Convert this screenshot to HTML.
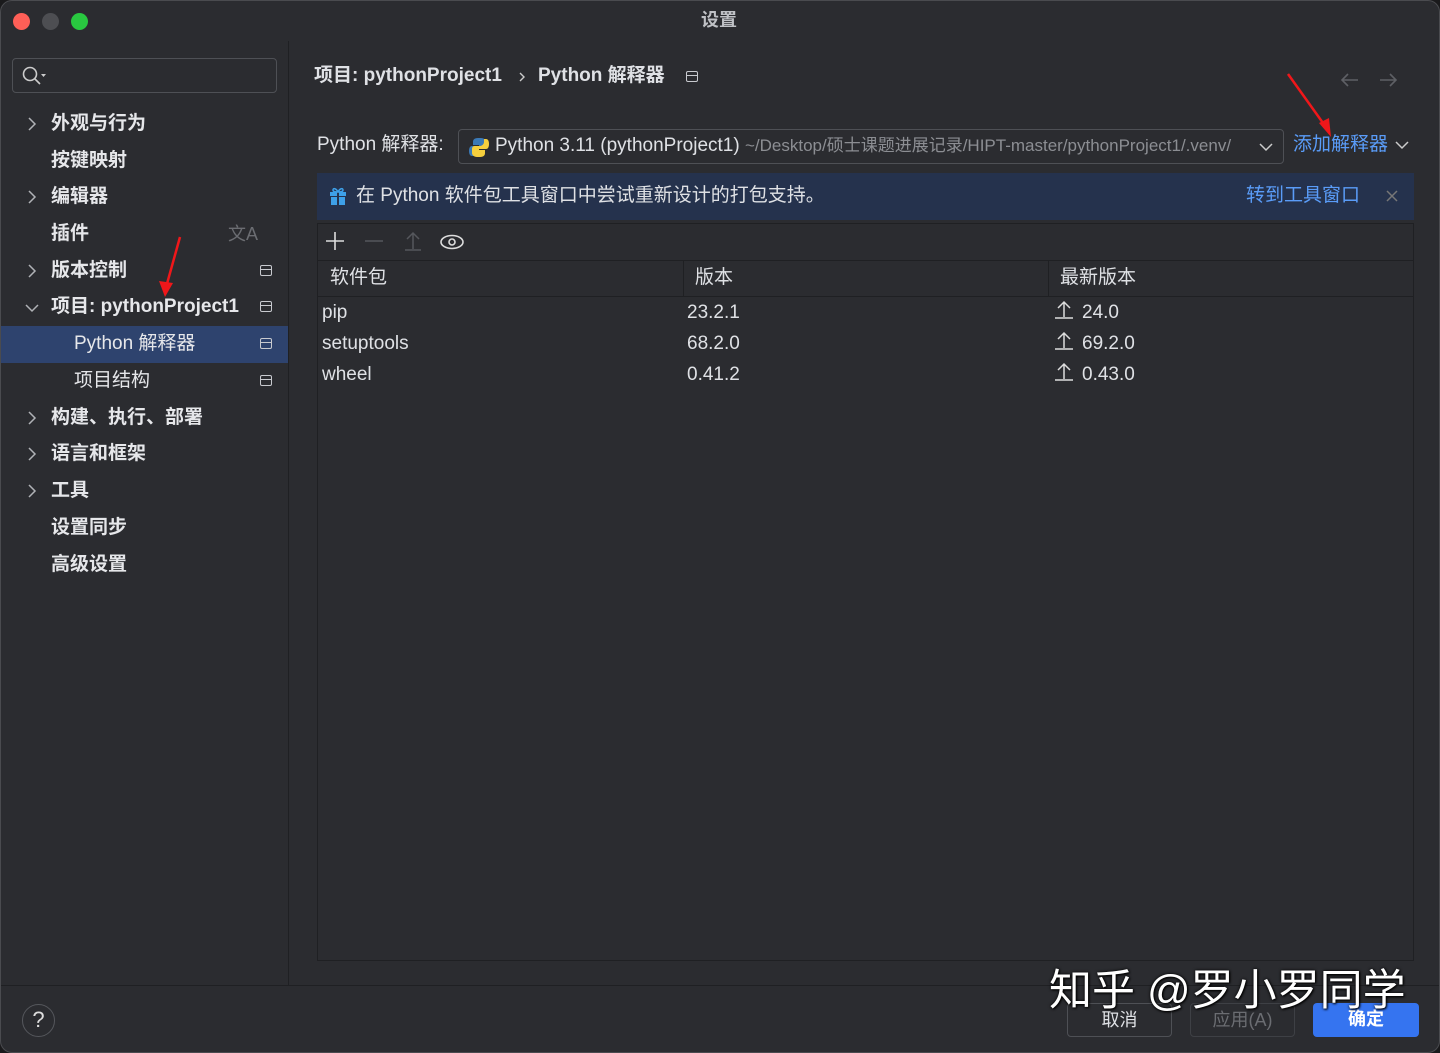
<!DOCTYPE html>
<html><head><meta charset="utf-8"><style>
*{margin:0;padding:0;box-sizing:border-box}
body{width:1440px;height:1053px;background:#1a1a1c;font-family:"Liberation Sans","Noto Sans CJK SC",sans-serif;color:#dfe1e5;overflow:hidden;position:relative;line-height:1.15}
.win{position:absolute;left:0;top:0;width:1440px;height:1053px;background:#2b2c30;border-radius:12px;border:1px solid #4a4b4f;overflow:hidden}
.abs{position:absolute;white-space:nowrap}
.dot{position:absolute;top:12px;width:17px;height:17px;border-radius:50%}
.side{position:absolute;left:0;top:40px;width:288px;height:944px;border-right:1px solid #1f2023}
.item{position:absolute;left:50px;font-size:19px;font-weight:bold;color:#e6e7ea}
.chev{position:absolute;left:25px}
.ico{position:absolute;width:12px;height:11px;border:1.5px solid #c8cacf;border-radius:2px}
.ico:after{content:"";position:absolute;left:0;right:0;top:3px;border-top:1.5px solid #c8cacf}
</style></head><body>
<div class="win">
<div class="dot" style="left:12px;background:#fe5f57"></div>
<div class="dot" style="left:41px;background:#4d4e52"></div>
<div class="dot" style="left:70px;background:#29c840"></div>
<div class="abs" style="left:700px;top:9px;font-size:18px;font-weight:bold;color:#bfc1c5">设置</div>

<div class="side">
<div class="abs" style="left:11px;top:17px;width:265px;height:35px;border:1px solid #4e5055;border-radius:4px"></div>
<svg class="abs" style="left:20px;top:24px" width="28" height="22" viewBox="0 0 28 22"><circle cx="9" cy="9" r="6.5" fill="none" stroke="#ccc" stroke-width="1.6"/><path d="M14 14l5 5" stroke="#ccc" stroke-width="1.6"/><path d="M20 9h5l-2.5 3z" fill="#ccc"/></svg>
<svg class="chev" style="top:76px" width="12" height="14"><path d="M3 1l6 6-6 6" fill="none" stroke="#b0b2b6" stroke-width="1.5"/></svg>
<div class="item" style="top:72px">外观与行为</div>
<div class="item" style="top:109px">按键映射</div>
<svg class="chev" style="top:149px" width="12" height="14"><path d="M3 1l6 6-6 6" fill="none" stroke="#b0b2b6" stroke-width="1.5"/></svg>
<div class="item" style="top:145px">编辑器</div>
<div class="item" style="top:182px">插件</div>
<div class="abs" style="left:227px;top:183px;font-size:18px;color:#6b6d72">文A</div>
<svg class="chev" style="top:223px" width="12" height="14"><path d="M3 1l6 6-6 6" fill="none" stroke="#b0b2b6" stroke-width="1.5"/></svg>
<div class="item" style="top:219px">版本控制</div>
<div class="ico" style="left:259px;top:224px"></div>
<svg class="chev" style="top:261px;left:24px" width="14" height="12"><path d="M1 3l6 6 6-6" fill="none" stroke="#b0b2b6" stroke-width="1.5"/></svg>
<div class="item" style="top:255px">项目: pythonProject1</div>
<div class="ico" style="left:259px;top:260px"></div>
<div class="abs" style="left:0;top:285px;width:287px;height:37px;background:#2e436e"></div>
<div class="abs" style="left:73px;top:292px;font-size:19px;color:#e6e7ea">Python 解释器</div>
<div class="ico" style="left:259px;top:297px"></div>
<div class="abs" style="left:73px;top:329px;font-size:19px;color:#e6e7ea">项目结构</div>
<div class="ico" style="left:259px;top:334px"></div>
<svg class="chev" style="top:370px" width="12" height="14"><path d="M3 1l6 6-6 6" fill="none" stroke="#b0b2b6" stroke-width="1.5"/></svg>
<div class="item" style="top:366px">构建、执行、部署</div>
<svg class="chev" style="top:406px" width="12" height="14"><path d="M3 1l6 6-6 6" fill="none" stroke="#b0b2b6" stroke-width="1.5"/></svg>
<div class="item" style="top:402px">语言和框架</div>
<svg class="chev" style="top:443px" width="12" height="14"><path d="M3 1l6 6-6 6" fill="none" stroke="#b0b2b6" stroke-width="1.5"/></svg>
<div class="item" style="top:439px">工具</div>
<div class="item" style="top:476px">设置同步</div>
<div class="item" style="top:513px">高级设置</div>
</div>
<svg class="abs" style="left:155px;top:232px" width="30" height="68"><path d="M24 4L9 58" stroke="#f0171a" stroke-width="2.5"/><path d="M3 48l6 16 8-14z" fill="#f0171a"/></svg>

<div class="abs" style="left:313px;top:64px;font-size:19px;font-weight:bold">项目: pythonProject1</div>
<svg class="abs" style="left:517px;top:71px" width="8" height="10"><path d="M2 1l4 4-4 4" fill="none" stroke="#ccc" stroke-width="1.4"/></svg>
<div class="abs" style="left:537px;top:64px;font-size:19px;font-weight:bold">Python 解释器</div>
<div class="ico" style="left:685px;top:70px"></div>
<svg class="abs" style="left:1338px;top:70px" width="60" height="18"><path d="M19 9H3M9 3L3 9l6 6M41 9h16M51 3l6 6-6 6" fill="none" stroke="#5e6065" stroke-width="1.6"/></svg>
<svg class="abs" style="left:1283px;top:70px" width="50" height="70"><path d="M4 3l40 56" stroke="#f0171a" stroke-width="2.5"/><path d="M35 52l12 14-2-19z" fill="#f0171a"/></svg>

<div class="abs" style="left:316px;top:133px;font-size:19px">Python 解释器:</div>
<div class="abs" style="left:457px;top:128px;width:826px;height:35px;border:1px solid #4e5055;border-radius:4px;background:#2b2c30"></div>
<svg class="abs" style="left:467px;top:135px" width="22" height="22"><path d="M10 2c-4 0-5 2-5 4v3h6v1H4c-2 0-3 2-3 5s1 5 3 5h2v-3c0-2 2-4 4-4h5c2 0 3-1 3-3V6c0-2-2-4-5-4z" fill="#3b79b6"/><path d="M12 21c4 0 5-2 5-4v-3h-6v-1h7c2 0 3-2 3-5s-1-5-3-5h-2v3c0 2-2 4-4 4H7c-2 0-3 1-3 3v4c0 2 2 4 5 4z" fill="#f6cf3d"/></svg>
<div class="abs" style="left:494px;top:134px;font-size:19px">Python 3.11 (pythonProject1) <span style="color:#8c8e93;font-size:17px">~/Desktop/硕士课题进展记录/HIPT-master/pythonProject1/.venv/</span></div>
<svg class="abs" style="left:1258px;top:141px" width="14" height="10"><path d="M1 2l6 6 6-6" fill="none" stroke="#ccc" stroke-width="1.5"/></svg>
<div class="abs" style="left:1292px;top:133px;font-size:19px;color:#5a9cf8">添加解释器</div>
<svg class="abs" style="left:1394px;top:139px" width="14" height="10"><path d="M1 2l6 6 6-6" fill="none" stroke="#ccc" stroke-width="1.5"/></svg>

<div class="abs" style="left:316px;top:172px;width:1097px;height:47px;background:#25324d"></div>
<svg class="abs" style="left:328px;top:185px" width="18" height="20"><rect x="1" y="6" width="16" height="4" fill="#3ea0e8"/><rect x="2" y="11" width="14" height="8" fill="#3ea0e8"/><rect x="8" y="6" width="2" height="13" fill="#25324d"/><path d="M9 6C7 2 4 2 4 4s3 2 5 2c2 0 5 0 5-2s-3-2-5 2" fill="none" stroke="#3ea0e8" stroke-width="1.5"/></svg>
<div class="abs" style="left:355px;top:184px;font-size:19px">在 Python 软件包工具窗口中尝试重新设计的打包支持。</div>
<div class="abs" style="left:1245px;top:184px;font-size:19px;color:#5a9cf8">转到工具窗口</div>
<svg class="abs" style="left:1385px;top:189px" width="12" height="12"><path d="M1 1l10 10M11 1L1 11" stroke="#777" stroke-width="1.5"/></svg>

<div class="abs" style="left:316px;top:222px;width:1097px;height:738px;border:1px solid #1f2023"></div>
<div class="abs" style="left:316px;top:259px;width:1097px;border-top:1px solid #1f2023"></div>
<div class="abs" style="left:316px;top:295px;width:1097px;border-top:1px solid #1f2023"></div>
<div class="abs" style="left:682px;top:260px;height:35px;border-left:1px solid #1f2023"></div>
<div class="abs" style="left:1047px;top:260px;height:35px;border-left:1px solid #1f2023"></div>
<svg class="abs" style="left:324px;top:230px" width="20" height="20"><path d="M10 1v18M1 10h18" stroke="#ddd" stroke-width="1.6"/></svg>
<svg class="abs" style="left:363px;top:230px" width="20" height="20"><path d="M1 10h18" stroke="#55575c" stroke-width="1.6"/></svg>
<svg class="abs" style="left:402px;top:229px" width="20" height="22"><path d="M10 3v16M4 9l6-6 6 6M2 20h16" fill="none" stroke="#55575c" stroke-width="1.5"/></svg>
<svg class="abs" style="left:438px;top:232px" width="26" height="18"><ellipse cx="13" cy="9" rx="11" ry="6.5" fill="none" stroke="#ddd" stroke-width="1.6"/><circle cx="13" cy="9" r="3" fill="none" stroke="#ddd" stroke-width="1.6"/></svg>
<div class="abs" style="left:329px;top:266px;font-size:19px">软件包</div>
<div class="abs" style="left:694px;top:266px;font-size:19px">版本</div>
<div class="abs" style="left:1059px;top:266px;font-size:19px">最新版本</div>
<div class="abs" style="left:321px;top:296px;font-size:19px;line-height:31px">pip<br>setuptools<br>wheel</div>
<div class="abs" style="left:686px;top:296px;font-size:19px;line-height:31px">23.2.1<br>68.2.0<br>0.41.2</div>
<svg class="abs" style="left:1053px;top:299px" width="20" height="85"><g fill="none" stroke="#ddd" stroke-width="1.5"><path d="M10 2v15M4 8l6-6 6 6M1 18h18"/><path d="M10 33v15M4 39l6-6 6 6M1 49h18"/><path d="M10 64v15M4 70l6-6 6 6M1 80h18"/></g></svg>
<div class="abs" style="left:1081px;top:296px;font-size:19px;line-height:31px">24.0<br>69.2.0<br>0.43.0</div>

<div class="abs" style="left:0;top:984px;width:1440px;border-top:1px solid #1f2023"></div>
<div class="abs" style="left:21px;top:1003px;width:33px;height:33px;border:1.5px solid #55575c;border-radius:50%;text-align:center;font-size:22px;line-height:30px;color:#ddd">?</div>
<div class="abs" style="left:1066px;top:1002px;width:105px;height:34px;border:1px solid #4e5055;border-radius:4px;text-align:center;font-size:18px;line-height:32px">取消</div>
<div class="abs" style="left:1189px;top:1002px;width:105px;height:34px;border:1px solid #3e4045;border-radius:4px;text-align:center;font-size:18px;line-height:32px;color:#6b6d72">应用(A)</div>
<div class="abs" style="left:1312px;top:1002px;width:106px;height:34px;background:#3574f0;border-radius:4px;text-align:center;font-size:18px;line-height:32px;font-weight:bold;color:#fff">确定</div>
<div class="abs" style="left:1048px;top:966px;font-size:43px;color:#fff;text-shadow:0 0 3px #000,1px 1px 2px #000">知乎 @罗小罗同学</div>
</div>
</body></html>
